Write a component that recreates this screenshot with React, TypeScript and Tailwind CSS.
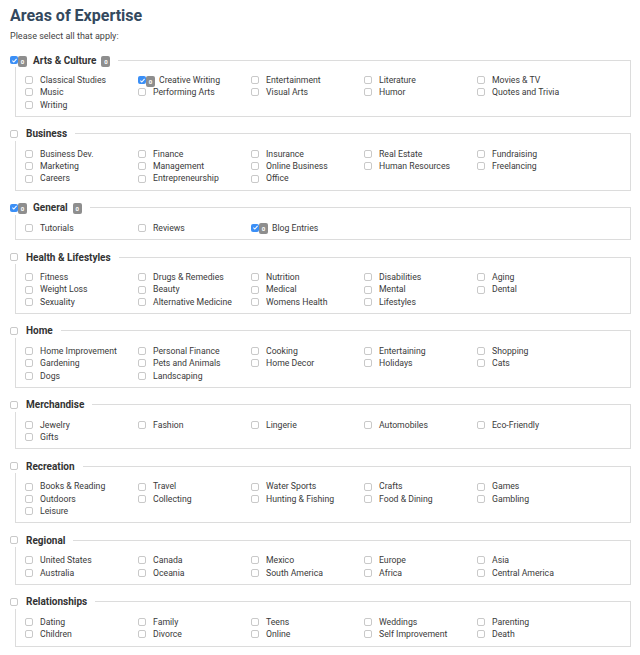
import { Fragment } from "react";

type Group = {
  title: string;
  checked?: boolean;
  items: string[];
  selected?: string[];
};

const groups: Group[] = [
  {
    title: "Arts & Culture",
    checked: true,
    items: [
      "Classical Studies", "Creative Writing", "Entertainment", "Literature", "Movies & TV",
      "Music", "Performing Arts", "Visual Arts", "Humor", "Quotes and Trivia",
      "Writing",
    ],
    selected: ["Creative Writing"],
  },
  {
    title: "Business",
    items: [
      "Business Dev.", "Finance", "Insurance", "Real Estate", "Fundraising",
      "Marketing", "Management", "Online Business", "Human Resources", "Freelancing",
      "Careers", "Entrepreneurship", "Office",
    ],
  },
  {
    title: "General",
    checked: true,
    items: ["Tutorials", "Reviews", "Blog Entries"],
    selected: ["Blog Entries"],
  },
  {
    title: "Health & Lifestyles",
    items: [
      "Fitness", "Drugs & Remedies", "Nutrition", "Disabilities", "Aging",
      "Weight Loss", "Beauty", "Medical", "Mental", "Dental",
      "Sexuality", "Alternative Medicine", "Womens Health", "Lifestyles",
    ],
  },
  {
    title: "Home",
    items: [
      "Home Improvement", "Personal Finance", "Cooking", "Entertaining", "Shopping",
      "Gardening", "Pets and Animals", "Home Decor", "Holidays", "Cats",
      "Dogs", "Landscaping",
    ],
  },
  {
    title: "Merchandise",
    items: ["Jewelry", "Fashion", "Lingerie", "Automobiles", "Eco-Friendly", "Gifts"],
  },
  {
    title: "Recreation",
    items: [
      "Books & Reading", "Travel", "Water Sports", "Crafts", "Games",
      "Outdoors", "Collecting", "Hunting & Fishing", "Food & Dining", "Gambling",
      "Leisure",
    ],
  },
  {
    title: "Regional",
    items: [
      "United States", "Canada", "Mexico", "Europe", "Asia",
      "Australia", "Oceania", "South America", "Africa", "Central America",
    ],
  },
  {
    title: "Relationships",
    items: [
      "Dating", "Family", "Teens", "Weddings", "Parenting",
      "Children", "Divorce", "Online", "Self Improvement", "Death",
    ],
  },
];

const Box = ({ checked }: { checked?: boolean }) =>
  checked ? (
    <span className="w-[8px] h-[8px] shrink-0 rounded-[2px] bg-[#3b8ff6] flex items-center justify-center">
      <svg viewBox="0 0 8 8" className="w-[7px] h-[7px]">
        <polyline points="1.6,4.2 3.2,5.8 6.4,2.2" fill="none" stroke="white" strokeWidth="1.2" />
      </svg>
    </span>
  ) : (
    <span className="w-[8px] h-[8px] shrink-0 rounded-[2px] border border-[#c9c9c9] bg-white" />
  );

const Badge = () => (
  <span className="w-[9px] h-[11px] shrink-0 rounded-[2px] bg-[#8e8e8e] text-white text-[6px] leading-[11px] font-bold text-center mt-[2px]">
    0
  </span>
);

export default function App() {
  return (
    <div className="bg-white min-h-[655px] pl-[10px] pr-[9px] pt-[4px] text-[#333]" style={{ fontFamily: "Roboto, 'Liberation Sans', sans-serif" }}>
      <h1 className="text-[16px] leading-[24px] font-bold text-[#34495e]">Areas of Expertise</h1>
      <p className="text-[9px] leading-[12px] mt-[2px] text-[#444]">Please select all that apply:</p>

      <div className="mt-[11px] flex flex-col gap-[10px]">
        {groups.map((g) => (
          <fieldset key={g.title} className="ml-[5px] border border-[#dcdcdc] pl-[9px] pt-[7px] pb-[5px]">
            <legend className="-ml-[15px] pr-[8px]">
              <span className="flex items-center h-[14px]">
                <Box checked={g.checked} />
                {g.checked && <Badge />}
                <span className={`text-[10px] font-bold text-[#333] ${g.checked ? "ml-[6px]" : "ml-[8px]"}`}>{g.title}</span>
                {g.checked && (
                  <span className="ml-[5px] flex"><Badge /></span>
                )}
              </span>
            </legend>
            <div className="grid grid-cols-[repeat(5,113px)]">
              {g.items.map((it) => {
                const sel = g.selected?.includes(it);
                return (
                  <Fragment key={it}>
                    <label className="flex items-center h-[12.3px] text-[8.7px] leading-[12.3px] text-[#3a3a3a] whitespace-nowrap">
                      <Box checked={sel} />
                      {sel ? (
                        <>
                          <Badge />
                          <span className="ml-[4px]">{it}</span>
                        </>
                      ) : (
                        <span className="ml-[7px]">{it}</span>
                      )}
                    </label>
                  </Fragment>
                );
              })}
            </div>
          </fieldset>
        ))}
      </div>
    </div>
  );
}
